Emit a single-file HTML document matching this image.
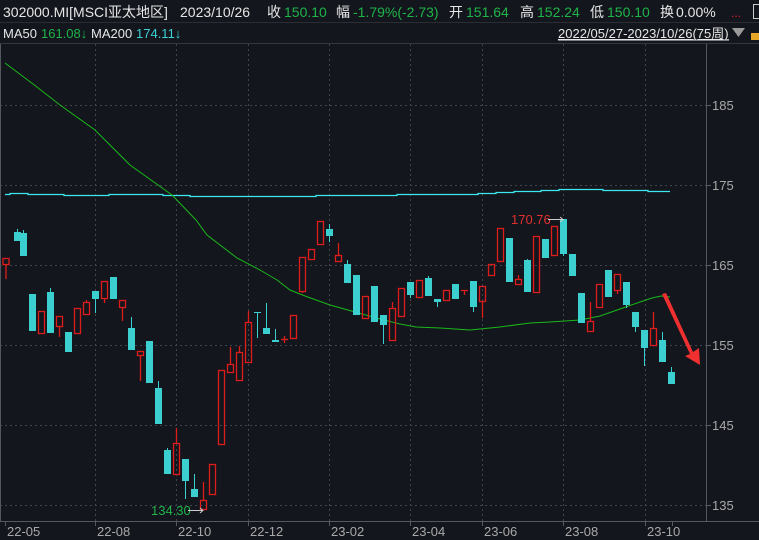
<!DOCTYPE html>
<html><head><meta charset="utf-8"><style>
html,body{margin:0;padding:0;background:#13161c;width:759px;height:540px;overflow:hidden;font-family:"Liberation Sans","Noto Sans CJK SC",sans-serif;}
svg{position:absolute;left:0;top:0}
</style></head><body>
<svg width="759" height="540" xmlns="http://www.w3.org/2000/svg" font-family="Liberation Sans, Noto Sans CJK SC, sans-serif">
<rect width="759" height="540" fill="#13161c"/>
<line x1="0" y1="22.5" x2="759" y2="22.5" stroke="#2a2d33"/>
<line x1="0" y1="43.5" x2="759" y2="43.5" stroke="#34373d"/>
<text x="3" y="17" font-size="14" fill="#e6e6e6">302000.MI[MSCI亚太地区]</text>
<text x="180" y="17" font-size="14" fill="#e6e6e6">2023/10/26</text>
<text x="267" y="17" font-size="14" fill="#e6e6e6">收</text>
<text x="284" y="17" font-size="14" fill="#1fb34a">150.10</text>
<text x="336" y="17" font-size="14" fill="#e6e6e6">幅</text>
<text x="353" y="17" font-size="14" fill="#1fb34a">-1.79%(-2.73)</text>
<text x="449" y="17" font-size="14" fill="#e6e6e6">开</text>
<text x="466" y="17" font-size="14" fill="#1fb34a">151.64</text>
<text x="520" y="17" font-size="14" fill="#e6e6e6">高</text>
<text x="537" y="17" font-size="14" fill="#1fb34a">152.24</text>
<text x="590" y="17" font-size="14" fill="#e6e6e6">低</text>
<text x="607" y="17" font-size="14" fill="#1fb34a">150.10</text>
<text x="660" y="17" font-size="14" fill="#e6e6e6">换</text>
<text x="676" y="17" font-size="14" fill="#e6e6e6">0.00%</text>
<text x="731" y="17" font-size="12" fill="#e02020">...</text>
<rect x="753.5" y="4.5" width="6" height="14" fill="none" stroke="#ccc"/>
<text x="3" y="38" font-size="13" fill="#e6e6e6">MA50</text>
<text x="41" y="38" font-size="13" fill="#1fb34a">161.08↓</text>
<text x="91" y="38" font-size="13" fill="#e6e6e6">MA200</text>
<text x="136" y="38" font-size="13" fill="#3cd0d8">174.11↓</text>
<text x="558" y="38" font-size="13" fill="#e6e6e6" text-decoration="underline">2022/05/27-2023/10/26(75周)</text>
<line x1="558" y1="40" x2="729" y2="40" stroke="#e6e6e6"/>
<polygon points="732,28 745,28 738.5,37" fill="#9a9a9a"/>
<rect x="751" y="33" width="8" height="7" fill="#e8a628"/>
<g stroke="#40444c" stroke-dasharray="2,3">
<line x1="0" y1="105.5" x2="706" y2="105.5"/><line x1="0" y1="185.5" x2="706" y2="185.5"/><line x1="0" y1="265.5" x2="706" y2="265.5"/><line x1="0" y1="345.5" x2="706" y2="345.5"/><line x1="0" y1="425.5" x2="706" y2="425.5"/><line x1="0" y1="505.5" x2="706" y2="505.5"/>
<line x1="95.5" y1="44" x2="95.5" y2="521"/><line x1="176.5" y1="44" x2="176.5" y2="521"/><line x1="248.5" y1="44" x2="248.5" y2="521"/><line x1="329.5" y1="44" x2="329.5" y2="521"/><line x1="410.5" y1="44" x2="410.5" y2="521"/><line x1="482.5" y1="44" x2="482.5" y2="521"/><line x1="563.5" y1="44" x2="563.5" y2="521"/><line x1="645.5" y1="44" x2="645.5" y2="521"/>
</g>
<line x1="706.5" y1="44" x2="706.5" y2="521" stroke="#55585e"/>
<line x1="0" y1="521.5" x2="759" y2="521.5" stroke="#55585e"/>
<line x1="0.5" y1="44" x2="0.5" y2="521" stroke="#55585e"/>
<g stroke="#55585e"><line x1="5.5" y1="521" x2="5.5" y2="526"/><line x1="95.5" y1="521" x2="95.5" y2="526"/><line x1="176.5" y1="521" x2="176.5" y2="526"/><line x1="248.5" y1="521" x2="248.5" y2="526"/><line x1="329.5" y1="521" x2="329.5" y2="526"/><line x1="410.5" y1="521" x2="410.5" y2="526"/><line x1="482.5" y1="521" x2="482.5" y2="526"/><line x1="563.5" y1="521" x2="563.5" y2="526"/><line x1="645.5" y1="521" x2="645.5" y2="526"/><line x1="672.5" y1="521" x2="672.5" y2="526"/>
<line x1="706" y1="105.5" x2="711" y2="105.5"/><line x1="706" y1="185.5" x2="711" y2="185.5"/><line x1="706" y1="265.5" x2="711" y2="265.5"/><line x1="706" y1="345.5" x2="711" y2="345.5"/><line x1="706" y1="425.5" x2="711" y2="425.5"/><line x1="706" y1="505.5" x2="711" y2="505.5"/></g>
<g font-size="13" fill="#a8a8a8">
<text x="712" y="110">185</text><text x="712" y="190">175</text><text x="712" y="270">165</text><text x="712" y="350">155</text><text x="712" y="430">145</text><text x="712" y="510">135</text>
<text x="7" y="536">22-05</text><text x="97" y="536">22-08</text><text x="178" y="536">22-10</text><text x="250" y="536">22-12</text><text x="331" y="536">23-02</text><text x="412" y="536">23-04</text><text x="484" y="536">23-06</text><text x="565" y="536">23-08</text><text x="647" y="536">23-10</text>
</g>
<!-- MA200 -->
<polyline fill="none" stroke="#3ce8f0" stroke-width="1.2" points="5,194.5 10,194.5 10,193.5 28,193.5 28,194.5 64,194.5 64,195.5 109,195.5 109,194.5 163,194.5 163,195.5 190,195.5 190,196.5 316,196.5 316,195.5 397,195.5 397,194.5 478,194.5 478,193.5 496,193.5 496,192.5 514,192.5 514,191.5 541,191.5 541,190.5 559,190.5 559,189.5 603,189.5 603,190.5 648,190.5 648,191.5 670,191.5"/>
<!-- MA50 -->
<polyline fill="none" stroke="#1ab81a" stroke-width="1" points="5,63 33,84 60,105 95,130 130,165 172,195 196,220 207,235 237,258 260,270 277,280 290,290 305,296 330,305 355,312 380,319 400,324 416,327 440,328 470,330 500,327 530,323 550,322 580,320 600,316 620,309 640,302 652,298 661,296 670,297"/>
<!-- cyan candles -->
<g fill="#3ccfcf" stroke="#3ccfcf">
<line x1="17.5" y1="229" x2="17.5" y2="232"/><rect x="14" y="232" width="7" height="9" stroke="none"/>
<line x1="23.5" y1="230" x2="23.5" y2="233"/><rect x="20" y="233" width="7" height="23" stroke="none"/>
<rect x="29" y="294" width="7" height="37" stroke="none"/>
<line x1="50.5" y1="288" x2="50.5" y2="292"/><rect x="47" y="292" width="7" height="41" stroke="none"/>
<rect x="65" y="332" width="7" height="20" stroke="none"/>
<line x1="95.5" y1="299" x2="95.5" y2="313"/><rect x="92" y="291" width="7" height="8" stroke="none"/>
<rect x="110" y="277" width="7" height="22" stroke="none"/>
<line x1="131.5" y1="317" x2="131.5" y2="328"/><rect x="128" y="328" width="7" height="22" stroke="none"/>
<rect x="146" y="341" width="7" height="42" stroke="none"/>
<line x1="158.5" y1="381" x2="158.5" y2="388"/><rect x="155" y="388" width="7" height="36" stroke="none"/>
<line x1="167.5" y1="448" x2="167.5" y2="450"/><rect x="164" y="450" width="7" height="24" stroke="none"/>
<line x1="185.5" y1="481" x2="185.5" y2="499"/><rect x="182" y="459" width="7" height="22" stroke="none"/>
<line x1="194.5" y1="474" x2="194.5" y2="489"/><rect x="191" y="489" width="7" height="8" stroke="none"/>
<line x1="257.5" y1="312" x2="257.5" y2="338"/><line x1="254" y1="312.5" x2="261" y2="312.5"/>
<line x1="266.5" y1="303" x2="266.5" y2="328"/><rect x="263" y="328" width="7" height="6" stroke="none"/>
<line x1="275.5" y1="329" x2="275.5" y2="340"/><rect x="272" y="340" width="7" height="2" stroke="none"/>
<line x1="329.5" y1="224" x2="329.5" y2="242"/><rect x="326" y="229" width="7" height="7" stroke="none"/>
<line x1="347.5" y1="260" x2="347.5" y2="264"/><rect x="344" y="264" width="7" height="19" stroke="none"/>
<rect x="353" y="275" width="7" height="40" stroke="none"/>
<rect x="371" y="286" width="7" height="36" stroke="none"/>
<line x1="383.5" y1="325" x2="383.5" y2="344"/><rect x="380" y="315" width="7" height="10" stroke="none"/>
<line x1="410.5" y1="295" x2="410.5" y2="298"/><rect x="407" y="282" width="7" height="13" stroke="none"/>
<line x1="428.5" y1="276" x2="428.5" y2="278"/><rect x="425" y="278" width="7" height="18" stroke="none"/>
<line x1="437.5" y1="302" x2="437.5" y2="307"/><rect x="434" y="299" width="7" height="3" stroke="none"/>
<rect x="452" y="284" width="7" height="15" stroke="none"/>
<line x1="473.5" y1="307" x2="473.5" y2="312"/><rect x="470" y="281" width="7" height="26" stroke="none"/>
<rect x="506" y="238" width="7" height="44" stroke="none"/>
<line x1="527.5" y1="259" x2="527.5" y2="260"/><rect x="524" y="260" width="7" height="32" stroke="none"/>
<rect x="542" y="239" width="7" height="19" stroke="none"/>
<line x1="563.5" y1="254" x2="563.5" y2="256"/><rect x="560" y="219" width="7" height="35" stroke="none"/>
<rect x="569" y="254" width="7" height="22" stroke="none"/>
<rect x="578" y="293" width="7" height="30" stroke="none"/>
<rect x="605" y="270" width="7" height="27" stroke="none"/>
<line x1="626.5" y1="305" x2="626.5" y2="308"/><rect x="623" y="282" width="7" height="23" stroke="none"/>
<line x1="635.5" y1="327" x2="635.5" y2="332"/><rect x="632" y="312" width="7" height="15" stroke="none"/>
<line x1="644.5" y1="348" x2="644.5" y2="366"/><rect x="641" y="330" width="7" height="18" stroke="none"/>
<line x1="662.5" y1="332" x2="662.5" y2="340"/><rect x="659" y="340" width="7" height="22" stroke="none"/>
<line x1="671.5" y1="367" x2="671.5" y2="372"/><rect x="668" y="372" width="7" height="12" stroke="none"/>
</g>
<!-- red candles -->
<g fill="none" stroke="#dd1c1c" stroke-width="1.3">
<rect x="3" y="258.5" width="6" height="6"/><line x1="6" y1="264.5" x2="6" y2="279"/>
<rect x="38.5" y="311.5" width="6" height="22"/>
<rect x="56.5" y="316.5" width="6" height="10"/><line x1="59.5" y1="326.5" x2="59.5" y2="337"/>
<rect x="74.5" y="308.5" width="6" height="25"/>
<rect x="83.5" y="302.5" width="6" height="12"/><line x1="86.5" y1="300" x2="86.5" y2="302.5"/>
<rect x="101.5" y="281.5" width="6" height="17"/><line x1="104.5" y1="298.5" x2="104.5" y2="303"/>
<rect x="119.5" y="300.5" width="6" height="7"/><line x1="122.5" y1="307.5" x2="122.5" y2="321"/>
<rect x="137.5" y="351.5" width="6" height="4"/><line x1="140.5" y1="355.5" x2="140.5" y2="381"/>
<rect x="173.5" y="443.5" width="6" height="31"/><line x1="176.5" y1="428" x2="176.5" y2="443.5"/>
<rect x="200.5" y="500.5" width="6" height="9"/><line x1="203.5" y1="482" x2="203.5" y2="500.5"/>
<rect x="209.5" y="464.5" width="6" height="30"/>
<rect x="218.5" y="370.5" width="6" height="74"/>
<rect x="227.5" y="364.5" width="6" height="8"/><line x1="230.5" y1="347" x2="230.5" y2="364.5"/>
<rect x="236.5" y="352.5" width="6" height="28"/><line x1="239.5" y1="346" x2="239.5" y2="352.5"/>
<rect x="245.5" y="322.5" width="6" height="40"/><line x1="248.5" y1="311" x2="248.5" y2="322.5"/>
<line x1="281" y1="339.5" x2="288" y2="339.5"/><line x1="284.5" y1="336" x2="284.5" y2="343"/>
<rect x="290.5" y="315.5" width="6" height="23"/>
<rect x="299.5" y="257.5" width="6" height="34"/><line x1="302.5" y1="291.5" x2="302.5" y2="293"/>
<rect x="308.5" y="249.5" width="6" height="10"/>
<rect x="317.5" y="221.5" width="6" height="23"/>
<rect x="335.5" y="255.5" width="6" height="6"/><line x1="338.5" y1="243" x2="338.5" y2="255.5"/>
<rect x="362.5" y="296.5" width="6" height="22"/>
<rect x="389.5" y="308.5" width="6" height="32"/><line x1="392.5" y1="302" x2="392.5" y2="308.5"/>
<rect x="398.5" y="288.5" width="6" height="28"/>
<rect x="416.5" y="280.5" width="6" height="17"/>
<rect x="443.5" y="290.5" width="6" height="10"/>
<line x1="461" y1="290.5" x2="468" y2="290.5"/><line x1="464.5" y1="290" x2="464.5" y2="295"/>
<rect x="479.5" y="286.5" width="6" height="15"/><line x1="482.5" y1="301.5" x2="482.5" y2="318"/>
<rect x="488.5" y="264.5" width="6" height="11"/>
<rect x="497.5" y="228.5" width="6" height="33"/>
<rect x="515.5" y="279.5" width="6" height="5"/><line x1="518.5" y1="275" x2="518.5" y2="279.5"/>
<rect x="533.5" y="236.5" width="6" height="56"/>
<rect x="551.5" y="226.5" width="6" height="29"/>
<rect x="587.5" y="321.5" width="6" height="10"/><line x1="590.5" y1="302" x2="590.5" y2="321.5"/>
<rect x="596.5" y="284.5" width="6" height="23"/>
<rect x="614.5" y="274.5" width="6" height="16"/><line x1="617.5" y1="290.5" x2="617.5" y2="294"/>
<rect x="650.5" y="328.5" width="6" height="17"/><line x1="653.5" y1="312" x2="653.5" y2="328.5"/>
</g>
<text x="151" y="515" font-size="13" fill="#1fb34a">134.30</text>
<line x1="188" y1="510.5" x2="203" y2="510.5" stroke="#ccc"/><polyline points="200,508 203,510.5 200,513" fill="none" stroke="#ccc"/>
<text x="511" y="224" font-size="13" fill="#e03030">170.76</text>
<line x1="548" y1="219.5" x2="563" y2="219.5" stroke="#ccc"/><polyline points="560,217 563,219.5 560,222" fill="none" stroke="#ccc"/>
<!-- red arrow -->
<polygon points="662,294 666,293 693,352 699,348 700,365 685,356 690,354" fill="#f03030"/>
</svg>
</body></html>
